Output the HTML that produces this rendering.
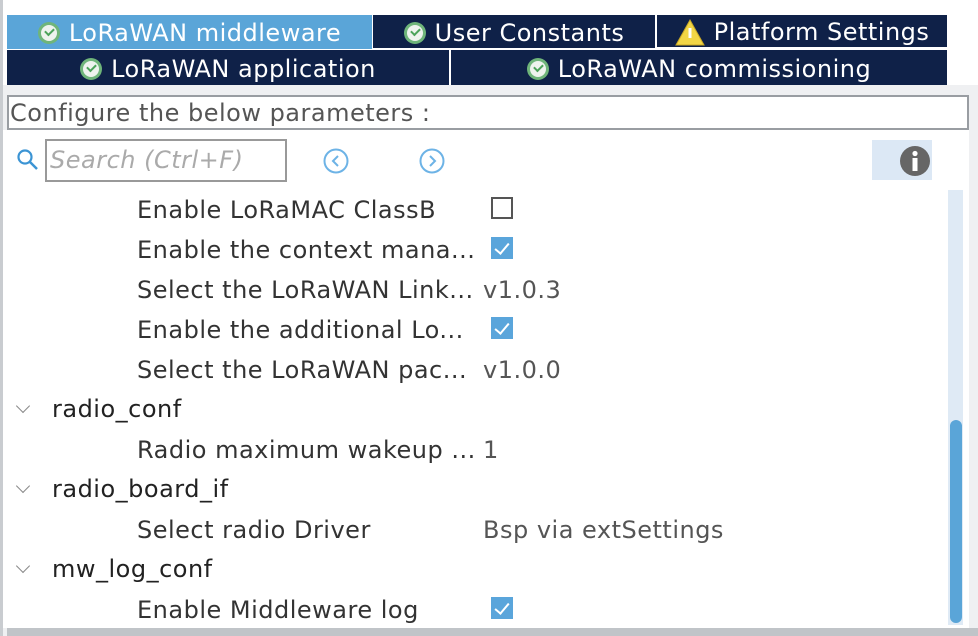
<!DOCTYPE html>
<html><head><style>
*{margin:0;padding:0;box-sizing:border-box}
body{width:978px;height:636px;background:#fff;position:relative;overflow:hidden;font-family:"DejaVu Sans","Liberation Sans",sans-serif;color:#333;letter-spacing:0.5px}
.a{position:absolute}
.tab{position:absolute;background:#0f2148;color:#fff;font-size:24px;display:flex;align-items:center;justify-content:center;gap:9px;white-space:nowrap;padding-top:2px}
.ok{width:22px;height:22px;border-radius:50%;background:#6fb57a;display:inline-flex;align-items:center;justify-content:center}
.ok i{width:16px;height:16px;border-radius:50%;background:#eef3ee;display:block;position:relative}
.ok i:after{content:"";position:absolute;left:4px;top:3px;width:7px;height:4px;border-left:2px solid #4ca35a;border-bottom:2px solid #4ca35a;transform:rotate(-45deg)}
.row{position:absolute;left:137px;font-size:24px;color:#333;white-space:nowrap;line-height:28px}
.val{position:absolute;left:483px;font-size:24px;color:#555;line-height:28px}
.cb{position:absolute;left:491px;width:22px;height:22px}
.cb.off{border:2px solid #555;background:#fff}
.cb.on{background:#5aa5db}
.cb.on:after{content:"";position:absolute;left:7px;top:3px;width:6px;height:12px;border-right:2px solid #fff;border-bottom:2px solid #fff;transform:rotate(40deg)}
.grp{position:absolute;left:52px;font-size:24px;color:#222;line-height:28px}
.arr{position:absolute;left:18px;width:10px;height:10px;border-right:1.5px solid #888;border-bottom:1.5px solid #888;transform:rotate(45deg)}
</style></head><body>
<div class="a" style="left:0;top:0;width:3px;height:636px;background:#c9ccd0"></div>
<div class="a" style="left:3px;top:85px;width:975px;height:551px;background:#eff0f2"></div>
<div class="a" style="left:3px;top:130px;width:966px;height:498px;background:#fff"></div>

<div class="tab" style="left:7px;top:15px;width:365px;height:34px;background:#5aa5d8"><span class="ok"><i></i></span>LoRaWAN middleware</div>
<div class="tab" style="left:373px;top:15px;width:282px;height:33px"><span class="ok"><i></i></span>User Constants</div>
<div class="tab" style="left:657px;top:15px;width:290px;height:32px"><svg width="30" height="28" viewBox="0 0 30 28"><path d="M15 2 L29 27 L1 27 Z" fill="#f2d645" stroke="#c9a825" stroke-width="1"/><rect x="13.5" y="10" width="3" height="10" fill="#fff"/></svg>Platform Settings</div>
<div class="tab" style="left:7px;top:50px;width:442px;height:35px"><span class="ok"><i></i></span>LoRaWAN application</div>
<div class="tab" style="left:451px;top:50px;width:496px;height:35px"><span class="ok"><i></i></span>LoRaWAN commissioning</div>

<div class="a" style="left:7px;top:95px;width:962px;height:35px;border:2px solid #999da2;background:#fff;font-size:24px;color:#555;padding-left:1px;line-height:32px;white-space:nowrap">Configure the below parameters :</div>

<svg class="a" style="left:16px;top:148px" width="24" height="24" viewBox="0 0 24 24"><circle cx="9" cy="9" r="6.5" fill="none" stroke="#3b94d4" stroke-width="2.2"/><path d="M14 14 L21 21" stroke="#3b94d4" stroke-width="2.5"/></svg>
<div class="a" style="left:45px;top:139px;width:242px;height:43px;border:2px solid #999;font-size:24px;font-style:italic;color:#aaa;line-height:38px;padding-left:3px;white-space:nowrap;overflow:hidden">Search (Ctrl+F)</div>
<svg class="a" style="left:322px;top:147px" width="28" height="28" viewBox="0 0 28 28"><circle cx="14" cy="14" r="11.5" fill="none" stroke="#6db3e6" stroke-width="2"/><path d="M16 9 L11 14 L16 19" fill="none" stroke="#6db3e6" stroke-width="2"/></svg>
<svg class="a" style="left:418px;top:147px" width="28" height="28" viewBox="0 0 28 28"><circle cx="14" cy="14" r="11.5" fill="none" stroke="#6db3e6" stroke-width="2"/><path d="M12 9 L17 14 L12 19" fill="none" stroke="#6db3e6" stroke-width="2"/></svg>
<div class="a" style="left:872px;top:140px;width:60px;height:40px;background:#dce8f5"></div>
<svg class="a" style="left:899px;top:145px" width="32" height="32" viewBox="0 0 32 32"><circle cx="16" cy="16" r="15" fill="#666"/><circle cx="16" cy="8.5" r="2.6" fill="#fff"/><rect x="13.5" y="13" width="5" height="13" fill="#fff"/></svg>

<div class="a" style="left:948px;top:190px;width:15px;height:435px;background:#dfeaf5"></div>
<div class="a" style="left:950px;top:420px;width:12px;height:203px;background:#5aa5d8;border-radius:6px"></div>
<div class="a" style="left:7px;top:628px;width:971px;height:8px;background:#c0c4c8"></div>

<div class="row" style="top:196px">Enable LoRaMAC ClassB</div><div class="cb off" style="top:197px"></div>
<div class="row" style="top:236px">Enable the context mana...</div><div class="cb on" style="top:237px"></div>
<div class="row" style="top:276px">Select the LoRaWAN Link...</div><div class="val" style="top:276px">v1.0.3</div>
<div class="row" style="top:316px">Enable the additional Lo...</div><div class="cb on" style="top:317px"></div>
<div class="row" style="top:356px">Select the LoRaWAN pac...</div><div class="val" style="top:356px">v1.0.0</div>
<div class="arr" style="top:401px"></div><div class="grp" style="top:395px">radio_conf</div>
<div class="row" style="top:436px">Radio maximum wakeup ...</div><div class="val" style="top:436px">1</div>
<div class="arr" style="top:481px"></div><div class="grp" style="top:475px">radio_board_if</div>
<div class="row" style="top:516px">Select radio Driver</div><div class="val" style="top:516px">Bsp via extSettings</div>
<div class="arr" style="top:561px"></div><div class="grp" style="top:555px">mw_log_conf</div>
<div class="row" style="top:596px">Enable Middleware log</div><div class="cb on" style="top:597px"></div>
</body></html>
